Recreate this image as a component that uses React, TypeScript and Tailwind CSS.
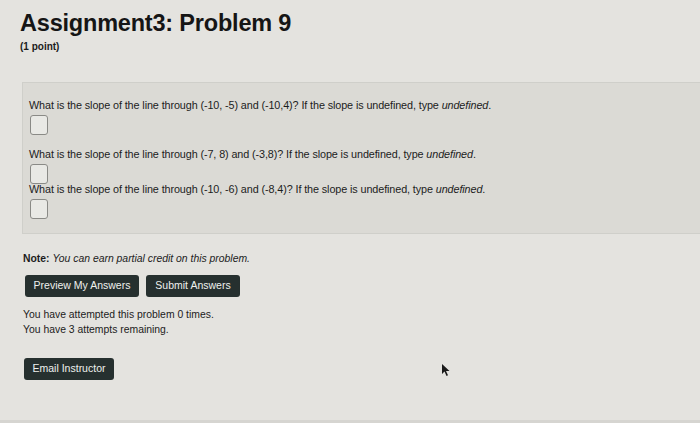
import React from "react";

const questions = [
  { pts: "(-10, -5) and (-10,4)", gap: "" },
  { pts: "(-7, 8) and (-3,8)", gap: "mt-[12px]" },
  { pts: "(-10, -6) and (-8,4)", gap: "-mt-[2px]" },
];

function AnswerBox() {
  return (
    <div className="mt-[3px] ml-[1px] w-[18px] h-[20px] rounded-[3px] border border-[#8a8a86] bg-[#e9e9e5]" />
  );
}

function DarkButton({ label, className = "" }: { label: string; className?: string }) {
  return (
    <button
      className={`h-[22px] whitespace-nowrap rounded-[3px] bg-[#26302f] px-[8px] text-[10.5px] font-medium text-[#eef0ee] ${className}`}
    >
      {label}
    </button>
  );
}

export default function App() {
  return (
    <div
      className="relative w-[700px] h-[423px] overflow-hidden bg-[#e4e3df] text-[#1c1c1c]"
      style={{ fontFamily: '"Liberation Sans", Arial, sans-serif' }}
    >
      <div className="pl-[20px] pt-[9px]">
        <h1 className="text-[23.5px] font-bold leading-[28px] tracking-[-0.2px] text-[#151515]">
          Assignment3: Problem 9
        </h1>
        <div className="mt-[3px] text-[10px] font-bold leading-[14px]">(1 point)</div>
      </div>

      <div className="ml-[22px] mt-[28px] w-[690px] h-[152px] border border-[#cfcfca] bg-[#dbdad5] pl-[6px] pt-[15px]">
        {questions.map((q, i) => (
          <div key={i} className={q.gap}>
            <p className="text-[10.8px] leading-[14px] tracking-[-0.1px]">
              What is the slope of the line through {q.pts}? If the slope is undefined, type{" "}
              <em>undefined</em>.
            </p>
            <AnswerBox />
          </div>
        ))}
      </div>

      <div className="pl-[23px]">
        <p className="mt-[18px] text-[10.4px] leading-[14px]">
          <b>Note:</b> <em>You can earn partial credit on this problem.</em>
        </p>
        <div className="mt-[9px] flex gap-[7px] pl-[2px]">
          <DarkButton label="Preview My Answers" className="w-[114px]" />
          <DarkButton label="Submit Answers" className="w-[94px]" />
        </div>
        <div className="mt-[10px] text-[10.4px] leading-[15px]">
          <p>You have attempted this problem 0 times.</p>
          <p>You have 3 attempts remaining.</p>
        </div>
        <DarkButton label="Email Instructor" className="mt-[21px] ml-[1px] w-[90px]" />
      </div>

      <svg
        className="absolute left-[441px] top-[363px]"
        width="10"
        height="14"
        viewBox="0 0 10 14"
      >
        <path d="M1 1 L1 11 L3.5 8.5 L5.5 13 L7 12.3 L5 8 L8.5 8 Z" fill="#1a1a1a" />
      </svg>

      <div className="absolute bottom-0 left-0 h-[3px] w-full bg-[#d6d5d1]" />
    </div>
  );
}
